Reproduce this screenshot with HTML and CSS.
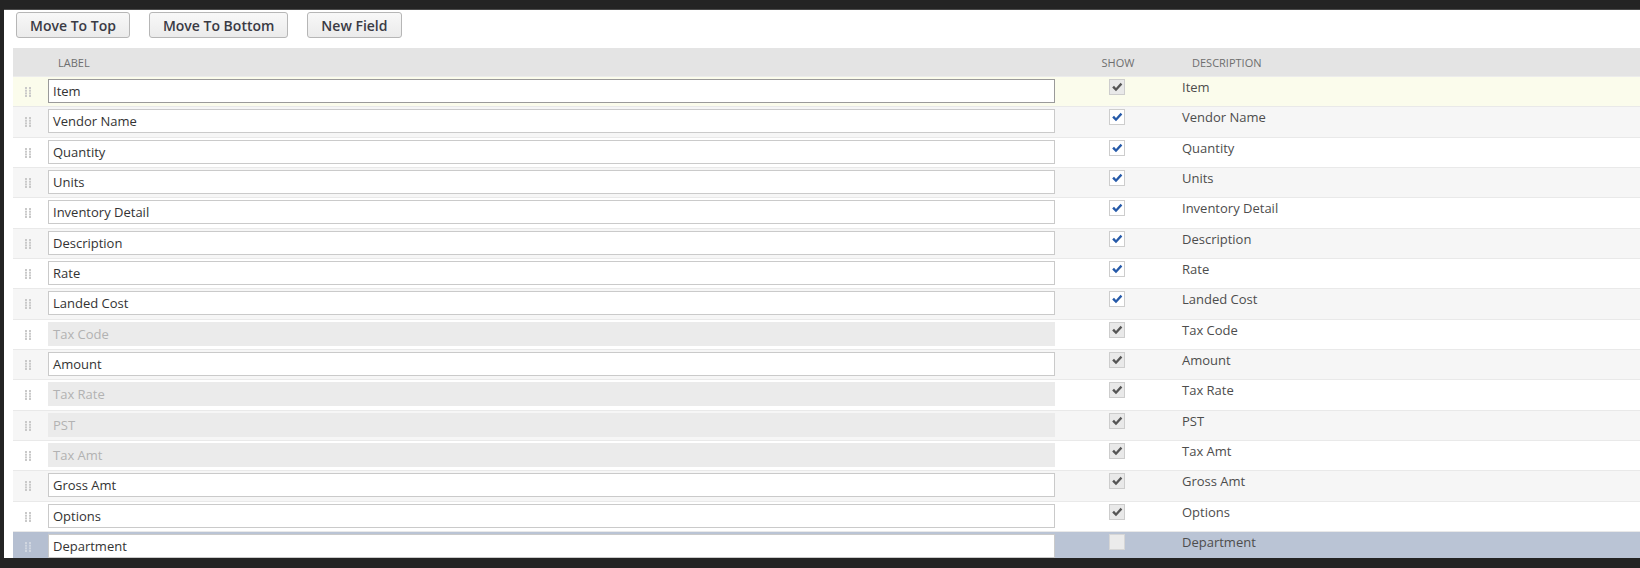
FILE: index.html
```html
<!DOCTYPE html>
<html>
<head>
<meta charset="utf-8">
<link rel="stylesheet" href="styles.css">
</head>
<body>
<div class="frame">
  <div class="panel">
    <div class="toolbar">
      <button class="btn">Move To Top</button>
      <button class="btn">Move To Bottom</button>
      <button class="btn">New Field</button>
    </div>
    <div class="table">
      <div class="head">
        <div></div>
        <div class="head-label">Label</div>
        <div class="head-show">Show</div>
        <div class="head-desc">Description</div>
      </div>

      <div class="row row--hl">
        <div class="handle"><svg width="6" height="10" viewBox="0 0 6 10"><g fill="#c9c9c9"><rect x="0" y="0" width="2" height="2"/><rect x="4" y="0" width="2" height="2"/><rect x="0" y="2.7" width="2" height="2"/><rect x="4" y="2.7" width="2" height="2"/><rect x="0" y="5.4" width="2" height="2"/><rect x="4" y="5.4" width="2" height="2"/><rect x="0" y="8" width="2" height="2"/><rect x="4" y="8" width="2" height="2"/></g></svg></div>
        <div class="cell"><div class="field field--focus">Item</div></div>
        <div class="show"><span class="cb cb--grey"><svg width="14" height="14" viewBox="0 0 14 14"><path d="M2.2 7.4 L4 5.8 L6 7.9 L10.6 2.8 L12.3 4.4 L6 11.3 Z"/></svg></span></div>
        <div class="desc">Item</div>
      </div>

      <div class="row row--alt">
        <div class="handle"><svg width="6" height="10" viewBox="0 0 6 10"><g fill="#c9c9c9"><rect x="0" y="0" width="2" height="2"/><rect x="4" y="0" width="2" height="2"/><rect x="0" y="2.7" width="2" height="2"/><rect x="4" y="2.7" width="2" height="2"/><rect x="0" y="5.4" width="2" height="2"/><rect x="4" y="5.4" width="2" height="2"/><rect x="0" y="8" width="2" height="2"/><rect x="4" y="8" width="2" height="2"/></g></svg></div>
        <div class="cell"><div class="field">Vendor Name</div></div>
        <div class="show"><span class="cb cb--blue"><svg width="14" height="14" viewBox="0 0 14 14"><path d="M2.2 7.4 L4 5.8 L6 7.9 L10.6 2.8 L12.3 4.4 L6 11.3 Z"/></svg></span></div>
        <div class="desc">Vendor Name</div>
      </div>

      <div class="row">
        <div class="handle"><svg width="6" height="10" viewBox="0 0 6 10"><g fill="#c9c9c9"><rect x="0" y="0" width="2" height="2"/><rect x="4" y="0" width="2" height="2"/><rect x="0" y="2.7" width="2" height="2"/><rect x="4" y="2.7" width="2" height="2"/><rect x="0" y="5.4" width="2" height="2"/><rect x="4" y="5.4" width="2" height="2"/><rect x="0" y="8" width="2" height="2"/><rect x="4" y="8" width="2" height="2"/></g></svg></div>
        <div class="cell"><div class="field">Quantity</div></div>
        <div class="show"><span class="cb cb--blue"><svg width="14" height="14" viewBox="0 0 14 14"><path d="M2.2 7.4 L4 5.8 L6 7.9 L10.6 2.8 L12.3 4.4 L6 11.3 Z"/></svg></span></div>
        <div class="desc">Quantity</div>
      </div>

      <div class="row row--alt">
        <div class="handle"><svg width="6" height="10" viewBox="0 0 6 10"><g fill="#c9c9c9"><rect x="0" y="0" width="2" height="2"/><rect x="4" y="0" width="2" height="2"/><rect x="0" y="2.7" width="2" height="2"/><rect x="4" y="2.7" width="2" height="2"/><rect x="0" y="5.4" width="2" height="2"/><rect x="4" y="5.4" width="2" height="2"/><rect x="0" y="8" width="2" height="2"/><rect x="4" y="8" width="2" height="2"/></g></svg></div>
        <div class="cell"><div class="field">Units</div></div>
        <div class="show"><span class="cb cb--blue"><svg width="14" height="14" viewBox="0 0 14 14"><path d="M2.2 7.4 L4 5.8 L6 7.9 L10.6 2.8 L12.3 4.4 L6 11.3 Z"/></svg></span></div>
        <div class="desc">Units</div>
      </div>

      <div class="row">
        <div class="handle"><svg width="6" height="10" viewBox="0 0 6 10"><g fill="#c9c9c9"><rect x="0" y="0" width="2" height="2"/><rect x="4" y="0" width="2" height="2"/><rect x="0" y="2.7" width="2" height="2"/><rect x="4" y="2.7" width="2" height="2"/><rect x="0" y="5.4" width="2" height="2"/><rect x="4" y="5.4" width="2" height="2"/><rect x="0" y="8" width="2" height="2"/><rect x="4" y="8" width="2" height="2"/></g></svg></div>
        <div class="cell"><div class="field">Inventory Detail</div></div>
        <div class="show"><span class="cb cb--blue"><svg width="14" height="14" viewBox="0 0 14 14"><path d="M2.2 7.4 L4 5.8 L6 7.9 L10.6 2.8 L12.3 4.4 L6 11.3 Z"/></svg></span></div>
        <div class="desc">Inventory Detail</div>
      </div>

      <div class="row row--alt">
        <div class="handle"><svg width="6" height="10" viewBox="0 0 6 10"><g fill="#c9c9c9"><rect x="0" y="0" width="2" height="2"/><rect x="4" y="0" width="2" height="2"/><rect x="0" y="2.7" width="2" height="2"/><rect x="4" y="2.7" width="2" height="2"/><rect x="0" y="5.4" width="2" height="2"/><rect x="4" y="5.4" width="2" height="2"/><rect x="0" y="8" width="2" height="2"/><rect x="4" y="8" width="2" height="2"/></g></svg></div>
        <div class="cell"><div class="field">Description</div></div>
        <div class="show"><span class="cb cb--blue"><svg width="14" height="14" viewBox="0 0 14 14"><path d="M2.2 7.4 L4 5.8 L6 7.9 L10.6 2.8 L12.3 4.4 L6 11.3 Z"/></svg></span></div>
        <div class="desc">Description</div>
      </div>

      <div class="row">
        <div class="handle"><svg width="6" height="10" viewBox="0 0 6 10"><g fill="#c9c9c9"><rect x="0" y="0" width="2" height="2"/><rect x="4" y="0" width="2" height="2"/><rect x="0" y="2.7" width="2" height="2"/><rect x="4" y="2.7" width="2" height="2"/><rect x="0" y="5.4" width="2" height="2"/><rect x="4" y="5.4" width="2" height="2"/><rect x="0" y="8" width="2" height="2"/><rect x="4" y="8" width="2" height="2"/></g></svg></div>
        <div class="cell"><div class="field">Rate</div></div>
        <div class="show"><span class="cb cb--blue"><svg width="14" height="14" viewBox="0 0 14 14"><path d="M2.2 7.4 L4 5.8 L6 7.9 L10.6 2.8 L12.3 4.4 L6 11.3 Z"/></svg></span></div>
        <div class="desc">Rate</div>
      </div>

      <div class="row row--alt">
        <div class="handle"><svg width="6" height="10" viewBox="0 0 6 10"><g fill="#c9c9c9"><rect x="0" y="0" width="2" height="2"/><rect x="4" y="0" width="2" height="2"/><rect x="0" y="2.7" width="2" height="2"/><rect x="4" y="2.7" width="2" height="2"/><rect x="0" y="5.4" width="2" height="2"/><rect x="4" y="5.4" width="2" height="2"/><rect x="0" y="8" width="2" height="2"/><rect x="4" y="8" width="2" height="2"/></g></svg></div>
        <div class="cell"><div class="field">Landed Cost</div></div>
        <div class="show"><span class="cb cb--blue"><svg width="14" height="14" viewBox="0 0 14 14"><path d="M2.2 7.4 L4 5.8 L6 7.9 L10.6 2.8 L12.3 4.4 L6 11.3 Z"/></svg></span></div>
        <div class="desc">Landed Cost</div>
      </div>

      <div class="row">
        <div class="handle"><svg width="6" height="10" viewBox="0 0 6 10"><g fill="#c9c9c9"><rect x="0" y="0" width="2" height="2"/><rect x="4" y="0" width="2" height="2"/><rect x="0" y="2.7" width="2" height="2"/><rect x="4" y="2.7" width="2" height="2"/><rect x="0" y="5.4" width="2" height="2"/><rect x="4" y="5.4" width="2" height="2"/><rect x="0" y="8" width="2" height="2"/><rect x="4" y="8" width="2" height="2"/></g></svg></div>
        <div class="cell"><div class="field field--ro">Tax Code</div></div>
        <div class="show"><span class="cb cb--grey"><svg width="14" height="14" viewBox="0 0 14 14"><path d="M2.2 7.4 L4 5.8 L6 7.9 L10.6 2.8 L12.3 4.4 L6 11.3 Z"/></svg></span></div>
        <div class="desc">Tax Code</div>
      </div>

      <div class="row row--alt">
        <div class="handle"><svg width="6" height="10" viewBox="0 0 6 10"><g fill="#c9c9c9"><rect x="0" y="0" width="2" height="2"/><rect x="4" y="0" width="2" height="2"/><rect x="0" y="2.7" width="2" height="2"/><rect x="4" y="2.7" width="2" height="2"/><rect x="0" y="5.4" width="2" height="2"/><rect x="4" y="5.4" width="2" height="2"/><rect x="0" y="8" width="2" height="2"/><rect x="4" y="8" width="2" height="2"/></g></svg></div>
        <div class="cell"><div class="field">Amount</div></div>
        <div class="show"><span class="cb cb--grey"><svg width="14" height="14" viewBox="0 0 14 14"><path d="M2.2 7.4 L4 5.8 L6 7.9 L10.6 2.8 L12.3 4.4 L6 11.3 Z"/></svg></span></div>
        <div class="desc">Amount</div>
      </div>

      <div class="row">
        <div class="handle"><svg width="6" height="10" viewBox="0 0 6 10"><g fill="#c9c9c9"><rect x="0" y="0" width="2" height="2"/><rect x="4" y="0" width="2" height="2"/><rect x="0" y="2.7" width="2" height="2"/><rect x="4" y="2.7" width="2" height="2"/><rect x="0" y="5.4" width="2" height="2"/><rect x="4" y="5.4" width="2" height="2"/><rect x="0" y="8" width="2" height="2"/><rect x="4" y="8" width="2" height="2"/></g></svg></div>
        <div class="cell"><div class="field field--ro">Tax Rate</div></div>
        <div class="show"><span class="cb cb--grey"><svg width="14" height="14" viewBox="0 0 14 14"><path d="M2.2 7.4 L4 5.8 L6 7.9 L10.6 2.8 L12.3 4.4 L6 11.3 Z"/></svg></span></div>
        <div class="desc">Tax Rate</div>
      </div>

      <div class="row row--alt">
        <div class="handle"><svg width="6" height="10" viewBox="0 0 6 10"><g fill="#c9c9c9"><rect x="0" y="0" width="2" height="2"/><rect x="4" y="0" width="2" height="2"/><rect x="0" y="2.7" width="2" height="2"/><rect x="4" y="2.7" width="2" height="2"/><rect x="0" y="5.4" width="2" height="2"/><rect x="4" y="5.4" width="2" height="2"/><rect x="0" y="8" width="2" height="2"/><rect x="4" y="8" width="2" height="2"/></g></svg></div>
        <div class="cell"><div class="field field--ro">PST</div></div>
        <div class="show"><span class="cb cb--grey"><svg width="14" height="14" viewBox="0 0 14 14"><path d="M2.2 7.4 L4 5.8 L6 7.9 L10.6 2.8 L12.3 4.4 L6 11.3 Z"/></svg></span></div>
        <div class="desc">PST</div>
      </div>

      <div class="row">
        <div class="handle"><svg width="6" height="10" viewBox="0 0 6 10"><g fill="#c9c9c9"><rect x="0" y="0" width="2" height="2"/><rect x="4" y="0" width="2" height="2"/><rect x="0" y="2.7" width="2" height="2"/><rect x="4" y="2.7" width="2" height="2"/><rect x="0" y="5.4" width="2" height="2"/><rect x="4" y="5.4" width="2" height="2"/><rect x="0" y="8" width="2" height="2"/><rect x="4" y="8" width="2" height="2"/></g></svg></div>
        <div class="cell"><div class="field field--ro">Tax Amt</div></div>
        <div class="show"><span class="cb cb--grey"><svg width="14" height="14" viewBox="0 0 14 14"><path d="M2.2 7.4 L4 5.8 L6 7.9 L10.6 2.8 L12.3 4.4 L6 11.3 Z"/></svg></span></div>
        <div class="desc">Tax Amt</div>
      </div>

      <div class="row row--alt">
        <div class="handle"><svg width="6" height="10" viewBox="0 0 6 10"><g fill="#c9c9c9"><rect x="0" y="0" width="2" height="2"/><rect x="4" y="0" width="2" height="2"/><rect x="0" y="2.7" width="2" height="2"/><rect x="4" y="2.7" width="2" height="2"/><rect x="0" y="5.4" width="2" height="2"/><rect x="4" y="5.4" width="2" height="2"/><rect x="0" y="8" width="2" height="2"/><rect x="4" y="8" width="2" height="2"/></g></svg></div>
        <div class="cell"><div class="field">Gross Amt</div></div>
        <div class="show"><span class="cb cb--grey"><svg width="14" height="14" viewBox="0 0 14 14"><path d="M2.2 7.4 L4 5.8 L6 7.9 L10.6 2.8 L12.3 4.4 L6 11.3 Z"/></svg></span></div>
        <div class="desc">Gross Amt</div>
      </div>

      <div class="row">
        <div class="handle"><svg width="6" height="10" viewBox="0 0 6 10"><g fill="#c9c9c9"><rect x="0" y="0" width="2" height="2"/><rect x="4" y="0" width="2" height="2"/><rect x="0" y="2.7" width="2" height="2"/><rect x="4" y="2.7" width="2" height="2"/><rect x="0" y="5.4" width="2" height="2"/><rect x="4" y="5.4" width="2" height="2"/><rect x="0" y="8" width="2" height="2"/><rect x="4" y="8" width="2" height="2"/></g></svg></div>
        <div class="cell"><div class="field">Options</div></div>
        <div class="show"><span class="cb cb--grey"><svg width="14" height="14" viewBox="0 0 14 14"><path d="M2.2 7.4 L4 5.8 L6 7.9 L10.6 2.8 L12.3 4.4 L6 11.3 Z"/></svg></span></div>
        <div class="desc">Options</div>
      </div>

      <div class="row row--sel">
        <div class="handle"><svg width="6" height="10" viewBox="0 0 6 10"><g fill="#d0d6e0"><rect x="0" y="0" width="2" height="2"/><rect x="4" y="0" width="2" height="2"/><rect x="0" y="2.7" width="2" height="2"/><rect x="4" y="2.7" width="2" height="2"/><rect x="0" y="5.4" width="2" height="2"/><rect x="4" y="5.4" width="2" height="2"/><rect x="0" y="8" width="2" height="2"/><rect x="4" y="8" width="2" height="2"/></g></svg></div>
        <div class="cell"><div class="field">Department</div></div>
        <div class="show"><span class="cb cb--empty"></span></div>
        <div class="desc">Department</div>
      </div>
    </div>
  </div>
</div>
</body>
</html>
```

FILE: styles.css
```css
html, body {
  margin: 0;
  padding: 0;
}

body {
  background: #242424;
  height: 568px;
  overflow: hidden;
  font-family: "Open Sans", "DejaVu Sans", sans-serif;
}

.frame {
  padding: 9px 0 0 4px;
}

.panel {
  background: #ffffff;
  border-top: 1px solid #4a4a4a;
  height: 549px;
  box-sizing: border-box;
  overflow: hidden;
  padding: 2px 0 0 9px;
}

.toolbar {
  display: flex;
  gap: 19px;
  margin-left: 3px;
}

.btn {
  height: 26px;
  box-sizing: border-box;
  padding: 0 13px;
  border: 1px solid #b6b6b6;
  border-radius: 3px;
  background: linear-gradient(#f8f8f8, #ebebeb);
  font-family: "Open Sans", sans-serif;
  font-weight: 600;
  font-size: 14px;
  color: #3a3a44;
  display: flex;
  align-items: center;
}

.table {
  margin-top: 10px;
}

.head,
.row {
  display: grid;
  grid-template-columns: 35px 1010px 117px 1fr;
}

.head {
  height: 29px;
  background: #e4e4e4;
  align-items: center;
  font-size: 11px;
  color: #6e6e6e;
  text-transform: uppercase;
  border-bottom: 1px solid #ececec;
  box-sizing: border-box;
}

.head-label {
  padding-left: 10px;
}

.head-show {
  text-align: center;
  padding-left: 3px;
}

.head-desc {
  padding-left: 17px;
}

.row {
  height: 30.35px;
  box-sizing: border-box;
  border-bottom: 1px solid #e9e9e9;
  background: #ffffff;
  align-items: start;
}

.row--alt {
  background: #f6f6f6;
}

.row--hl {
  background: #fbfcec;
}

.row--sel {
  background: #bac4d5;
}

.row--sel .handle {
  background: #b5bfd1;
  height: 100%;
}

.handle {
  padding: 10px 0 0 12px;
  line-height: 0;
}

.field {
  margin-top: 2px;
  width: 1007px;
  height: 24px;
  box-sizing: border-box;
  border: 1px solid #cacaca;
  background: #ffffff;
  padding-left: 4px;
  font-size: 13px;
  line-height: 22px;
  color: #333333;
  white-space: nowrap;
}

.field--focus {
  border-color: #9a9a9a;
}

.field--ro {
  background: #ebebeb;
  border-color: #ebebeb;
  color: #b2b2b2;
}

.show {
  display: flex;
  justify-content: center;
  padding-top: 2px;
}

.cb {
  width: 16px;
  height: 16px;
  box-sizing: border-box;
  border: 1px solid #cdcdcd;
  display: flex;
  align-items: center;
  justify-content: center;
}

.cb svg {
  display: block;
}

.cb--grey {
  background: #e9e9e9;
}

.cb--grey path {
  fill: #555555;
}

.cb--blue {
  background: #ffffff;
}

.cb--blue path {
  fill: #2559a8;
}

.cb--empty {
  background: #ebebeb;
  border-color: #d6d6d6;
}

.desc {
  padding-left: 7px;
  font-size: 13px;
  line-height: 20px;
  color: #4d4d4d;
  white-space: nowrap;
}
```
